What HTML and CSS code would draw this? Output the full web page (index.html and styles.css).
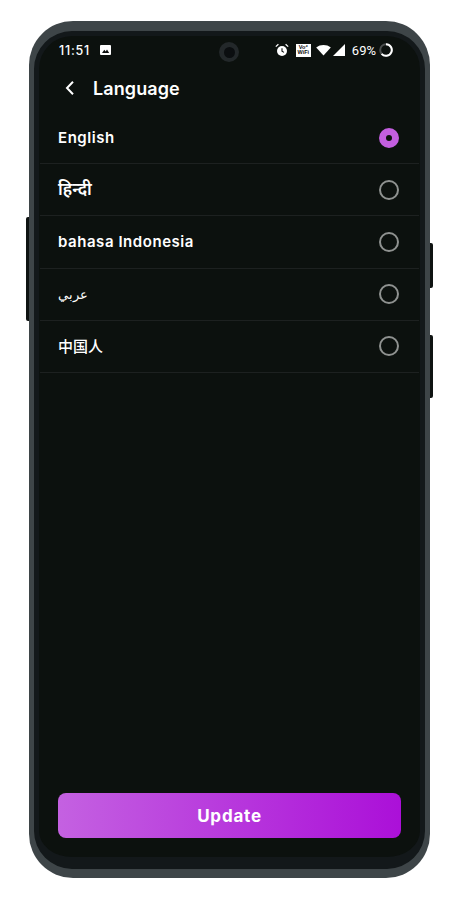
FILE: index.html
```html
<!DOCTYPE html>
<html lang="en">
<head>
<meta charset="utf-8">
<title>Language</title>
<link rel="stylesheet" href="styles.css">
</head>
<body>
<div class="phone">
  <span class="side side-left"></span>
  <span class="side side-right-a"></span>
  <span class="side side-right-b"></span>
  <div class="bezel">
    <div class="screen">
      <div class="status">
        <div class="status-left">
          <span class="time">11:51</span>
          <svg class="ic-image" width="11" height="10" viewBox="0 0 11 10"><rect x="0" y="0" width="11" height="10" rx="1" fill="#fff"/><path d="M2 8 L4.3 4.8 L5.7 6.4 L7 4.6 L9.2 8 Z" fill="#0d100f"/></svg>
        </div>
        <span class="camera"><span class="lens"></span></span>
        <div class="status-right">
          <svg width="14" height="14" viewBox="0 0 14 14"><circle cx="7" cy="8" r="5" fill="#fff"/><path d="M7 5.2V8.2L9 9.4" stroke="#0d100f" stroke-width="1.1" fill="none"/><path d="M0.8 3.6L3.4 1.2M13.2 3.6L10.6 1.2" stroke="#fff" stroke-width="1.2"/></svg>
          <span class="vowifi"><span>Vo⁴</span><span>WiFi</span></span>
          <svg class="ic-wifi" width="15" height="12" viewBox="0 0 15 12"><path d="M0.2 3.4C4.2 0.1 10.8 0.1 14.8 3.4L7.5 11.4Z" fill="#fff"/></svg>
          <svg class="ic-signal" width="12" height="12" viewBox="0 0 12 12"><path d="M12 0V12H0Z" fill="#fff"/></svg>
          <span class="battery">69%</span>
          <svg class="ic-ring" width="14" height="14" viewBox="0 0 14 14"><circle cx="7" cy="7" r="5.8" fill="none" stroke="#4b4e4e" stroke-width="2"/><path d="M7 1.2A5.8 5.8 0 1 1 2.6 10.8" fill="none" stroke="#fff" stroke-width="2"/></svg>
        </div>
      </div>
      <header class="appbar">
        <svg class="back" width="12" height="16" viewBox="0 0 12 16"><path d="M9 1.8L3 8L9 14.2" fill="none" stroke="#fff" stroke-width="2"/></svg>
        <h1 class="title">Language</h1>
      </header>
      <ul class="list">
        <li class="row"><span class="label">English</span><span class="radio radio-on"></span></li>
        <li class="row"><span class="label label-hi" lang="hi">हिन्दी</span><span class="radio"></span></li>
        <li class="row"><span class="label">bahasa Indonesia</span><span class="radio"></span></li>
        <li class="row"><span class="label label-ar" lang="ar">عربي</span><span class="radio"></span></li>
        <li class="row"><span class="label label-zh" lang="zh">中国人</span><span class="radio"></span></li>
      </ul>
      <button class="update">Update</button>
    </div>
  </div>
</div>
</body>
</html>
```
FILE: styles.css
```css
* { box-sizing: border-box; }
html, body { margin: 0; padding: 0; background: #fff; }
body { width: 460px; height: 900px; padding: 21px 0 0 29px; font-family: Inter, "Noto Sans", "Noto Sans CJK SC", sans-serif; overflow: hidden; }

.phone { position: relative; width: 401px; height: 857px; }
.side { position: absolute; width: 3px; background: #0f1312; }
.side-left { left: -3px; top: 196px; height: 104px; border-radius: 2px 0 0 2px; }
.side-right-a { right: -3px; top: 222px; height: 45px; border-radius: 0 2px 2px 0; }
.side-right-b { right: -3px; top: 314px; height: 63px; border-radius: 0 2px 2px 0; }

.bezel { height: 100%; padding: 10px 5px 9px; border-radius: 44px; background: #3e4548; }
.screen { display: flex; flex-direction: column; height: 100%; padding: 0 1px 19px; border: solid #13181a; border-width: 5px 5px 12px; border-radius: 38px; background: #0c110e; }

.status { position: relative; display: flex; justify-content: space-between; align-items: center; height: 20px; margin-top: 4px; padding: 0 26px 0 19px; color: #fff; }
.status-left { display: flex; align-items: center; gap: 10px; }
.time { font-size: 12.5px; font-weight: 500; letter-spacing: 0.8px; }
.camera { position: absolute; left: 179px; top: 2px; display: flex; align-items: center; justify-content: center; width: 20px; height: 20px; border-radius: 50%; background: #23282a; }
.lens { width: 11px; height: 11px; border-radius: 50%; background: #0b0e10; }
.status-right { display: flex; align-items: center; gap: 7px; }
.vowifi { display: flex; flex-direction: column; align-items: center; justify-content: center; width: 15px; height: 13px; background: #fff; color: #0d100e; font: 700 5.5px/5.5px "Liberation Sans", sans-serif; }
.ic-wifi { margin-left: -2px; }
.ic-signal { margin-left: -5px; }
.battery { font: 400 13px Roboto, sans-serif; }
.ic-ring { margin-left: -4px; }

.appbar { display: flex; align-items: center; gap: 17px; height: 38px; margin-top: 9px; padding-left: 24px; }
.title { margin: 0; color: #fff; font-size: 18px; font-weight: 600; letter-spacing: 0.1px; }

.list { margin: 5px 0 0; padding: 0; list-style: none; }
.row { display: flex; justify-content: space-between; align-items: center; height: 52.2px; padding: 0 20px 0 18px; border-bottom: 1px solid #1d2120; }
.label { color: #fff; font-size: 15px; font-weight: 600; letter-spacing: 0.55px; }
.label-hi { font-size: 17px; letter-spacing: 0; margin-top: -2px; }
.label-ar { font-size: 13px; font-weight: 400; letter-spacing: 0; margin-top: -1px; }
.label-zh { font-weight: 500; letter-spacing: 0; margin-top: -2px; }
.radio { width: 20px; height: 20px; border: 2px solid #8f9290; border-radius: 50%; }
.radio-on { border: 7px solid #c45fe0; background: #0c110e; }

.update { display: block; width: 343px; height: 45px; margin: auto 0 0 18px; border: 0; border-radius: 8px; background: linear-gradient(90deg, #c461e1, #ab10d8); color: #fff; font: 700 17px Inter, sans-serif; letter-spacing: 0.8px; }
```
